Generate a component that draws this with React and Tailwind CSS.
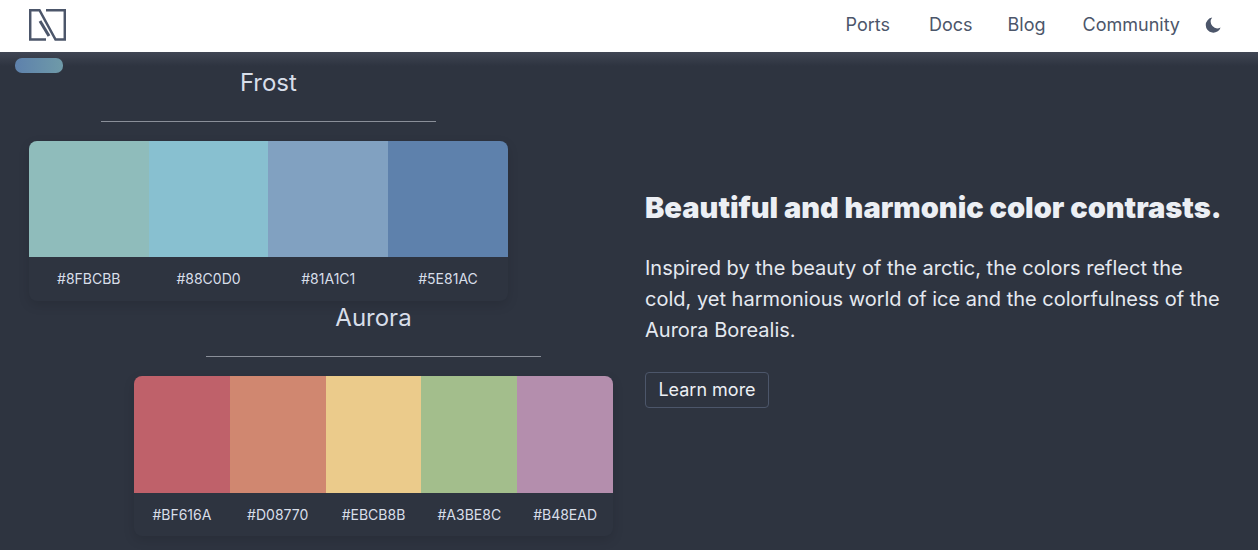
const frost = [
  { hex: "#8FBCBB", color: "bg-[#8fbcbb]" },
  { hex: "#88C0D0", color: "bg-[#88c0d0]" },
  { hex: "#81A1C1", color: "bg-[#81a1c1]" },
  { hex: "#5E81AC", color: "bg-[#5e81ac]" },
];

const aurora = [
  { hex: "#BF616A", color: "bg-[#bf616a]" },
  { hex: "#D08770", color: "bg-[#d08770]" },
  { hex: "#EBCB8B", color: "bg-[#ebcb8b]" },
  { hex: "#A3BE8C", color: "bg-[#a3be8c]" },
  { hex: "#B48EAD", color: "bg-[#b48ead]" },
];

const Logo = () => (
  <svg width="37" height="32" viewBox="0 0 37 32" fill="none" stroke="#4c566a" strokeWidth="2.5">
    <path d="M17 30.5H1.2V1.2H10.5L26.5 30.5H35.8V1.2H17" />
    <path d="M11 12L20 27" strokeWidth="3" />
  </svg>
);

const Moon = () => (
  <svg width="16" height="16" viewBox="0 0 16 16" fill="#4c566a">
    <path d="M7.2.6A7.6 7.6 0 1 0 15.6 10.4 6.6 6.6 0 0 1 7.2.6Z" />
  </svg>
);

const Palette = ({ title, swatches, className }) => (
  <div className={`w-[479px] ${className}`}>
    <h3 className="text-center text-[24px] leading-[30px] text-[#d8dee9]">{title}</h3>
    <div className="mx-auto mt-[23px] mb-[19px] h-px w-[335px] bg-[#8a8f99]" />
    <div className="overflow-hidden rounded-lg bg-[#2e3440] shadow-[0_4px_12px_rgba(0,0,0,0.12)]">
      <div className="flex h-[116.5px]">
        {swatches.map((s) => (
          <div key={s.hex} className={`flex-1 ${s.color}`} />
        ))}
      </div>
      <div className="flex h-[43.5px] items-center">
        {swatches.map((s) => (
          <span key={s.hex} className="flex-1 text-center text-[14px] text-[#d8dee9]">
            {s.hex}
          </span>
        ))}
      </div>
    </div>
  </div>
);

export default function App() {
  return (
    <div className="relative h-[550px] w-[1258px] overflow-hidden bg-[#2e3440] font-['Inter',sans-serif]">
      <nav className="flex h-[52px] items-center justify-between bg-white pb-[3px] pl-[29px] pr-[37px]">
        <Logo />
        <div className="flex items-center text-[18px] text-[#4c566a]">
          <a className="mr-[39px]">Ports</a>
          <a className="mr-[35px]">Docs</a>
          <a className="mr-[37px]">Blog</a>
          <a className="mr-[25px]">Community</a>
          <Moon />
        </div>
      </nav>

      {/* shadow under the nav */}
      <div className="absolute left-0 right-0 top-[52px] h-[14px] bg-gradient-to-b from-[#404654] to-[#2e3440]" />
      <div className="absolute left-[15px] top-[58px] h-[15px] w-[48px] rounded-[7px] bg-gradient-to-r from-[#5e81ac] to-[#6f9aa8]" />

      <main className="relative flex pt-[15.6px]">
        <div className="flex w-[645px] shrink-0 flex-col">
          <Palette title="Frost" swatches={frost} className="ml-[28.9px]" />
          <Palette title="Aurora" swatches={aurora} className="ml-[134px] mt-[2.7px]" />
        </div>
        <div className="pt-[120px] text-[#eceff4]">
          <h2 className="whitespace-nowrap text-[29px] font-black leading-[40px]">
            Beautiful and harmonic color contrasts.
          </h2>
          <p className="mt-[25px] w-[578px] text-[20px] leading-[31px] text-[#e5e9f0]">
            Inspired by the beauty of the arctic, the colors reflect the cold, yet harmonious world of ice and the colorfulness of the Aurora Borealis.
          </p>
          <button className="mt-[26px] h-[36px] w-[124px] rounded border border-[#4c566a] text-[18px] text-[#eceff4]">
            Learn more
          </button>
        </div>
      </main>
    </div>
  );
}
